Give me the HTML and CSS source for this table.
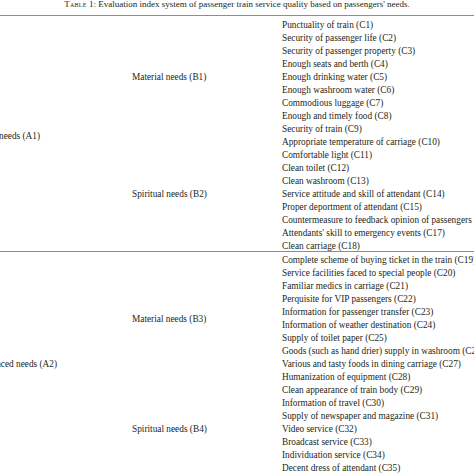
FILE: index.html
```html
<!DOCTYPE html>
<html lang="en">
<head>
<meta charset="utf-8">
<title>Table 1</title>
<link rel="stylesheet" href="styles.css">
</head>
<body>
<div class="page">
  <div class="caption"><span class="sc">Table</span> 1: Evaluation index system of passenger train service quality based on passengers' needs.</div>
  <div class="table">
    <div class="group">
      <div class="cell a span18">Basic needs (A1)</div>
      <div class="cell b r1 span9">Material needs (B1)</div>
      <div class="cell b r10 span9">Spiritual needs (B2)</div>
      <div class="cell c">Punctuality of train (C1)</div>
      <div class="cell c">Security of passenger life (C2)</div>
      <div class="cell c">Security of passenger property (C3)</div>
      <div class="cell c">Enough seats and berth (C4)</div>
      <div class="cell c">Enough drinking water (C5)</div>
      <div class="cell c">Enough washroom water (C6)</div>
      <div class="cell c">Commodious luggage (C7)</div>
      <div class="cell c">Enough and timely food (C8)</div>
      <div class="cell c">Security of train (C9)</div>
      <div class="cell c">Appropriate temperature of carriage (C10)</div>
      <div class="cell c">Comfortable light (C11)</div>
      <div class="cell c">Clean toilet (C12)</div>
      <div class="cell c">Clean washroom (C13)</div>
      <div class="cell c">Service attitude and skill of attendant (C14)</div>
      <div class="cell c">Proper deportment of attendant (C15)</div>
      <div class="cell c">Countermeasure to feedback opinion of passengers (C16)</div>
      <div class="cell c">Attendants' skill to emergency events (C17)</div>
      <div class="cell c">Clean carriage (C18)</div>
    </div>
    <div class="group">
      <div class="cell a span17">Advanced needs (A2)</div>
      <div class="cell b r1 span10">Material needs (B3)</div>
      <div class="cell b r11 span7">Spiritual needs (B4)</div>
      <div class="cell c">Complete scheme of buying ticket in the train (C19)</div>
      <div class="cell c">Service facilities faced to special people (C20)</div>
      <div class="cell c">Familiar medics in carriage (C21)</div>
      <div class="cell c">Perquisite for VIP passengers (C22)</div>
      <div class="cell c">Information for passenger transfer (C23)</div>
      <div class="cell c">Information of weather destination (C24)</div>
      <div class="cell c">Supply of toilet paper (C25)</div>
      <div class="cell c">Goods (such as hand drier) supply in washroom (C26)</div>
      <div class="cell c">Various and tasty foods in dining carriage (C27)</div>
      <div class="cell c">Humanization of equipment (C28)</div>
      <div class="cell c">Clean appearance of train body (C29)</div>
      <div class="cell c">Information of travel (C30)</div>
      <div class="cell c">Supply of newspaper and magazine (C31)</div>
      <div class="cell c">Video service (C32)</div>
      <div class="cell c">Broadcast service (C33)</div>
      <div class="cell c">Individuation service (C34)</div>
      <div class="cell c">Decent dress of attendant (C35)</div>
    </div>
  </div>
</div>
</body>
</html>
```
FILE: styles.css
```css
html, body {
  margin: 0;
  padding: 0;
  background: #ffffff;
}
body {
  width: 474px;
  height: 474px;
  overflow: hidden;
  font-family: "Liberation Serif", "Times New Roman", serif;
  color: #231f20;
}
.page {
  width: 474px;
}
.caption {
  height: 15px;
  font-size: 9px;
  line-height: 9px;
  text-align: center;
  white-space: nowrap;
}
.sc {
  font-variant: small-caps;
  letter-spacing: 0.3px;
}
.table {
  border-top: 1px solid #8e8e8e;
  padding-top: 1px;
  margin-left: -24px;
  width: 498px;
}
.group {
  display: grid;
  grid-template-columns: 156px 150px 192px;
  grid-auto-rows: 13px;
  font-size: 9.3px;
}
.group + .group {
  border-top: 1px solid #8e8e8e;
}
.cell {
  box-sizing: border-box;
  white-space: nowrap;
  display: flex;
  align-items: center;
  line-height: 10px;
  padding-top: 3px;
}
.a {
  grid-column: 1;
  grid-row-start: 1;
}
.b {
  grid-column: 2;
}
.c {
  grid-column: 3;
}
.r1 { grid-row-start: 1; }
.r10 { grid-row-start: 10; }
.r11 { grid-row-start: 11; }
.span7 { grid-row-end: span 7; }
.span9 { grid-row-end: span 9; }
.span10 { grid-row-end: span 10; }
.span17 { grid-row-end: span 17; }
.span18 { grid-row-end: span 18; }
```
